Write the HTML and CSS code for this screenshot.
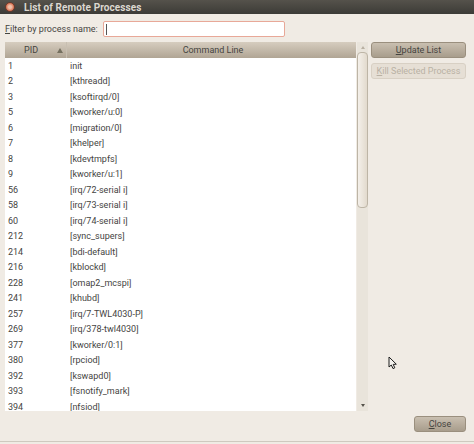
FILE: index.html
```html
<!DOCTYPE html>
<html lang="en">
<head>
    <meta charset="UTF-8">
    <title>List of Remote Processes</title>
    <link rel="stylesheet" href="styles.css">
</head>
<body>
    <div class="window">
        <div class="titlebar">
            <span class="close-dot"></span>
            <span class="title">List of Remote Processes</span>
        </div>

        <div class="filter-row">
            <label class="filter-label"><u>F</u>ilter by process name:</label>
            <div class="filter-input"><span class="caret"></span></div>
        </div>

        <div class="main">
            <div class="list">
                <div class="list-head">
                    <div class="head-pid"><span>PID</span><span class="sort-arrow"></span></div>
                    <div class="head-cmd">Command Line</div>
                </div>
                <div class="list-body">
                    <div class="row"><span class="pid">1</span><span>init</span></div>
                    <div class="row"><span class="pid">2</span><span>[kthreadd]</span></div>
                    <div class="row"><span class="pid">3</span><span>[ksoftirqd/0]</span></div>
                    <div class="row"><span class="pid">5</span><span>[kworker/u:0]</span></div>
                    <div class="row"><span class="pid">6</span><span>[migration/0]</span></div>
                    <div class="row"><span class="pid">7</span><span>[khelper]</span></div>
                    <div class="row"><span class="pid">8</span><span>[kdevtmpfs]</span></div>
                    <div class="row"><span class="pid">9</span><span>[kworker/u:1]</span></div>
                    <div class="row"><span class="pid">56</span><span>[irq/72-serial i]</span></div>
                    <div class="row"><span class="pid">58</span><span>[irq/73-serial i]</span></div>
                    <div class="row"><span class="pid">60</span><span>[irq/74-serial i]</span></div>
                    <div class="row"><span class="pid">212</span><span>[sync_supers]</span></div>
                    <div class="row"><span class="pid">214</span><span>[bdi-default]</span></div>
                    <div class="row"><span class="pid">216</span><span>[kblockd]</span></div>
                    <div class="row"><span class="pid">228</span><span>[omap2_mcspi]</span></div>
                    <div class="row"><span class="pid">241</span><span>[khubd]</span></div>
                    <div class="row"><span class="pid">257</span><span>[irq/7-TWL4030-P]</span></div>
                    <div class="row"><span class="pid">269</span><span>[irq/378-twl4030]</span></div>
                    <div class="row"><span class="pid">377</span><span>[kworker/0:1]</span></div>
                    <div class="row"><span class="pid">380</span><span>[rpciod]</span></div>
                    <div class="row"><span class="pid">392</span><span>[kswapd0]</span></div>
                    <div class="row"><span class="pid">393</span><span>[fsnotify_mark]</span></div>
                    <div class="row"><span class="pid">394</span><span>[nfsiod]</span></div>
                </div>
            </div>

            <div class="scrollbar">
                <span class="arrow-up"></span>
                <div class="thumb"></div>
                <span class="arrow-down"></span>
            </div>

            <div class="side">
                <button class="btn"><u>U</u>pdate List</button>
                <button class="btn btn-disabled"><u>K</u>ill Selected Process</button>
            </div>
        </div>

        <div class="footer">
            <button class="btn btn-close"><u>C</u>lose</button>
        </div>

        <svg class="pointer" width="10" height="14" viewBox="0 0 10 14">
            <path d="M1 1 L1 11 L3.3 9 L5 12.6 L6.8 11.8 L5.2 8.4 L8.3 8.2 Z" fill="#f4f2ee" stroke="#1c1c1c" stroke-width="1"/>
        </svg>
    </div>
</body>
</html>
```

FILE: styles.css
```css
body {
    margin: 0;
    background: #f0ebe4;
    color: #45443f;
    font-family: Roboto, sans-serif;
    font-size: 9px;
}
.window {
    position: relative;
    width: 474px;
    height: 444px;
    overflow: hidden;
    display: flex;
    flex-direction: column;
    background: #f0ebe4;
}
.titlebar {
    height: 14px;
    display: flex;
    align-items: center;
    padding-left: 5px;
    background: linear-gradient(#55524b, #3c3b37);
}
.close-dot {
    width: 10px;
    height: 10px;
    border-radius: 50%;
    background: radial-gradient(circle, #f0c0a8 25%, #d9704f 70%);
    border: 1px solid #6a3a2c;
    box-sizing: border-box;
}
.title {
    margin-left: 9px;
    color: #dcd8d0;
    font-weight: 700;
    font-size: 10px;
    letter-spacing: 0.1px;
}
.filter-row {
    height: 28px;
    box-sizing: border-box;
    padding: 2px 0 0 5px;
    display: flex;
    align-items: center;
}
.filter-label {
    width: 98px;
    white-space: nowrap;
}
.filter-input {
    width: 178px;
    height: 14px;
    display: flex;
    align-items: center;
    padding-left: 2px;
    background: #fff;
    border: 1px solid #e8a898;
    border-radius: 2px;
}
.caret {
    width: 1px;
    height: 11px;
    background: #555;
}
.main {
    display: flex;
    height: 369px;
    padding-left: 5px;
}
.list {
    width: 351px;
    display: flex;
    flex-direction: column;
    overflow: hidden;
    background: #fff;
}
.list-head {
    height: 16px;
    flex: none;
    display: flex;
    background: linear-gradient(#d6cdbf, #b0a594);
}
.head-pid {
    width: 62px;
    display: flex;
    align-items: center;
    padding-left: 19px;
    box-sizing: border-box;
    border-right: 1px solid #c8bfb1;
}
.sort-arrow {
    margin-left: 19px;
    border-left: 3px solid transparent;
    border-right: 3px solid transparent;
    border-bottom: 5px solid #75705f;
}
.head-cmd {
    flex: 1;
    display: flex;
    align-items: center;
    justify-content: center;
    padding-left: 3px;
}
.list-body {
    flex: 1;
    overflow: hidden;
}
.row {
    height: 15.5px;
    display: flex;
    align-items: center;
    padding-left: 3px;
    line-height: 8px;
    white-space: nowrap;
}
.pid {
    width: 62px;
}
.scrollbar {
    width: 11px;
    margin-left: 1px;
    display: flex;
    flex-direction: column;
    align-items: center;
    background: #e9e4db;
}
.arrow-up {
    margin: 4px 0 3px;
    border-left: 2px solid transparent;
    border-right: 2px solid transparent;
    border-bottom: 3px solid #b8b0a2;
}
.thumb {
    width: 100%;
    height: 156px;
    box-sizing: border-box;
    background: linear-gradient(90deg, #f4f0ea, #e2dacd);
    border: 1px solid #bdb5a6;
    border-radius: 4px;
}
.arrow-down {
    margin-top: auto;
    margin-bottom: 4px;
    border-left: 2px solid transparent;
    border-right: 2px solid transparent;
    border-top: 3px solid #55524b;
}
.side {
    width: 95px;
    margin-left: 3px;
    display: flex;
    flex-direction: column;
    gap: 5px;
}
.btn {
    height: 16px;
    padding: 0;
    font-family: inherit;
    font-size: 9px;
    white-space: nowrap;
    color: #45443f;
    background: linear-gradient(#c9bfb0, #a89d8c);
    border: 1px solid #9a8f7e;
    border-radius: 3px;
}
.btn-disabled {
    color: #b9b1a4;
    background: #e6dfd5;
    border-color: #d8d0c4;
}
.footer {
    flex: 1;
    display: flex;
    justify-content: flex-end;
    align-items: flex-start;
    padding: 5px 8px 0 0;
    margin-bottom: 2px;
    border-bottom: 1px solid #cfc9bf;
}
.btn-close {
    width: 52px;
}
.pointer {
    position: absolute;
    left: 388px;
    top: 356px;
}
```
